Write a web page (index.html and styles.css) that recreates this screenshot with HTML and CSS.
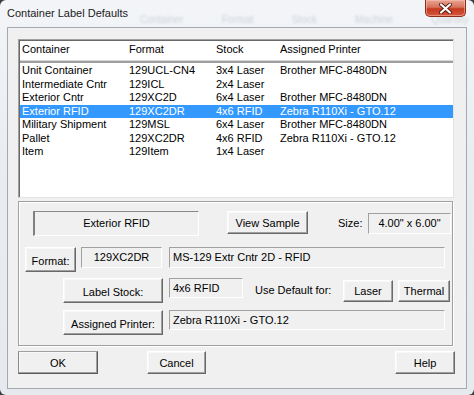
FILE: index.html
```html
<!DOCTYPE html>
<html lang="en">
<head>
    <meta charset="UTF-8">
    <meta name="viewport" content="width=device-width, initial-scale=1.0">
    <title>Container Label Defaults</title>
    <link rel="stylesheet" href="styles.css">
</head>
<body>
    <div class="window">
        <div class="titlebar">
            <span class="title">Container Label Defaults</span>
            <span class="glass">Container &nbsp; Format &nbsp; Stock &nbsp; Machine &nbsp; Quantity</span>
            <button class="close" title="Close">
                <svg width="13" height="11" viewBox="0 0 13 11">
                    <path d="M2 1.5 L11 9.5 M11 1.5 L2 9.5" stroke="#5a1a10" stroke-width="4" stroke-linecap="round"/>
                    <path d="M2 1.5 L11 9.5 M11 1.5 L2 9.5" stroke="#ffffff" stroke-width="2.2" stroke-linecap="round"/>
                </svg>
            </button>
        </div>
        <div class="client">
            <div class="list">
                <div class="list-head cols">
                    <span>Container</span><span>Format</span><span>Stock</span><span>Assigned Printer</span>
                </div>
                <div class="list-body">
                    <div class="cols row"><span>Unit Container</span><span>129UCL-CN4</span><span>3x4 Laser</span><span>Brother MFC-8480DN</span></div>
                    <div class="cols row"><span>Intermediate Cntr</span><span>129ICL</span><span>2x4 Laser</span><span></span></div>
                    <div class="cols row"><span>Exterior Cntr</span><span>129XC2D</span><span>6x4 Laser</span><span>Brother MFC-8480DN</span></div>
                    <div class="cols row selected"><span>Exterior RFID</span><span>129XC2DR</span><span>4x6 RFID</span><span>Zebra R110Xi - GTO.12</span></div>
                    <div class="cols row"><span>Military Shipment</span><span>129MSL</span><span>6x4 Laser</span><span>Brother MFC-8480DN</span></div>
                    <div class="cols row"><span>Pallet</span><span>129XC2DR</span><span>4x6 RFID</span><span>Zebra R110Xi - GTO.12</span></div>
                    <div class="cols row"><span>Item</span><span>129Item</span><span>1x4 Laser</span><span></span></div>
                </div>
            </div>

            <div class="group">
                <div class="line line-1">
                    <div class="field field-name">Exterior RFID</div>
                    <button class="btn btn-sample">View Sample</button>
                    <span class="label label-size">Size:</span>
                    <div class="field field-size">4.00" x 6.00"</div>
                </div>
                <div class="line line-2">
                    <button class="btn btn-format">Format:</button>
                    <div class="field field-code">129XC2DR</div>
                    <div class="field field-wide left">MS-129 Extr Cntr 2D - RFID</div>
                </div>
                <div class="line line-3">
                    <button class="btn btn-long">Label Stock:</button>
                    <div class="field field-stock left">4x6 RFID</div>
                    <span class="label label-default">Use Default for:</span>
                    <button class="btn btn-laser">Laser</button>
                    <button class="btn btn-thermal">Thermal</button>
                </div>
                <div class="line line-4">
                    <button class="btn btn-long">Assigned Printer:</button>
                    <div class="field field-wide field-printer left">Zebra R110Xi - GTO.12</div>
                </div>
            </div>

            <div class="footer">
                <button class="btn btn-ok">OK</button>
                <button class="btn btn-cancel">Cancel</button>
                <button class="btn btn-help">Help</button>
            </div>
        </div>
    </div>
</body>
</html>
```

FILE: styles.css
```css
* {
    box-sizing: border-box;
}
body {
    margin: 0;
    background: #3c3c3c;
    font-family: "Liberation Sans", Arial, sans-serif;
    font-size: 11px;
    color: #000;
}
.window {
    width: 474px;
    height: 395px;
    background: linear-gradient(180deg, #f3f5f8 0%, #e9edf1 40%, #e6eaee 100%);
    border-radius: 6px;
    overflow: hidden;
    display: flex;
    flex-direction: column;
}
.titlebar {
    height: 27px;
    display: flex;
    align-items: flex-start;
    padding-left: 7px;
    position: relative;
}
.title {
    margin-top: 7px;
    line-height: 13px;
    color: #1b1b1b;
    white-space: nowrap;
}
.glass {
    position: absolute;
    left: 140px;
    top: 14px;
    color: #d0d4d9;
    font-size: 10px;
    filter: blur(1.2px);
    white-space: nowrap;
    word-spacing: 10px;
}
.close {
    margin-left: auto;
    margin-right: 8px;
    width: 41px;
    height: 17px;
    padding: 0;
    border: 1px solid #8b2c1c;
    border-top: none;
    border-radius: 0 0 5px 5px;
    background: linear-gradient(180deg, #e8a593 0%, #d7735c 45%, #c5391f 55%, #d4583c 100%);
    box-shadow: inset 0 0 0 1px rgba(255, 200, 190, 0.5);
    display: flex;
    align-items: center;
    justify-content: center;
    position: relative;
    z-index: 1;
}
.client {
    margin: 0 7px;
    width: 460px;
    height: 362px;
    background: #f0f0f0;
    border: 1px solid #a3a9b0;
    padding: 11px 13px 0 10px;
}

/* list view */
.list {
    width: 436px;
    height: 159px;
    background: #fff;
    border: 1px solid;
    border-color: #a0a0a0 #e3e3e3 #e3e3e3 #a0a0a0;
    box-shadow: inset 1px 1px 0 #696969;
    padding: 1px 0 0 1px;
}
.cols {
    display: grid;
    grid-template-columns: 107px 87px 64px 1fr;
    white-space: nowrap;
}
.cols span {
    padding-left: 2px;
    overflow: hidden;
}
.list-head {
    height: 22px;
    line-height: 17px;
    border-bottom: 2px solid #a0a0a0;
    box-shadow: 0 -1px 0 #d5d5d5 inset;
}
.list-body {
    padding-top: 1px;
}
.row {
    height: 13.5px;
    line-height: 13.5px;
}
.row.selected {
    background: #3399ff;
    color: #fff;
}

/* lower group */
.group {
    margin-top: 3px;
    width: 435px;
    height: 145px;
    border: 1px solid #a0a0a0;
    box-shadow: inset 1px 1px 0 #fff, 1px 1px 0 #fff;
    padding-top: 9px;
}
.line {
    display: flex;
    align-items: flex-start;
}
.line-2 {
    margin-top: 11px;
}
.line-3 {
    margin-top: 6px;
}
.line-4 {
    margin-top: 7px;
}
.field {
    height: 21px;
    line-height: 19px;
    text-align: center;
    background: #f0f0f0;
    border: 1px solid;
    border-color: #a0a0a0 #fff #fff #a0a0a0;
    white-space: nowrap;
}
.field.left {
    text-align: left;
    padding-left: 3px;
}
.field-name {
    margin-left: 14px;
    width: 166px;
    height: 25px;
    line-height: 22px;
    border-left: 2px solid #808080;
    border-top-color: #8a8a8a;
}
.field-size {
    width: 83px;
    margin-top: 2px;
}
.field-code {
    margin-left: 5px;
    width: 81px;
}
.field-wide {
    margin-left: 7px;
    width: 276px;
}
.field-stock {
    margin-left: 6px;
    width: 74px;
    height: 20px;
    line-height: 18px;
}
.field-printer {
    margin-left: 6px;
    height: 20px;
    line-height: 18px;
}
.label {
    line-height: 25px;
    white-space: nowrap;
}
.label-size {
    margin-left: 30px;
    width: 30px;
    line-height: 24px;
}
.label-default {
    margin-left: 12px;
    width: 88px;
}

/* buttons */
.btn {
    font-family: inherit;
    font-size: 11px;
    color: #000;
    background: #f0f0f0;
    padding: 0;
    border: 1px solid;
    border-color: #fff #696969 #696969 #fff;
    box-shadow: inset -1px -1px 0 #a0a0a0, inset 1px 1px 0 #f8f8f8;
    white-space: nowrap;
}
.btn-sample {
    margin-left: 28px;
    width: 81px;
    height: 23px;
}
.btn-format {
    margin-left: 6px;
    width: 51px;
    height: 25px;
    padding-top: 2px;
}
.btn-long {
    margin-left: 44px;
    width: 100px;
    height: 25px;
    padding-top: 2px;
}
.btn-laser {
    width: 50px;
    height: 22px;
    margin-top: 2px;
}
.btn-thermal {
    margin-left: 5px;
    width: 52px;
    height: 22px;
    margin-top: 2px;
}
.footer {
    margin-top: 5px;
    display: flex;
}
.footer .btn {
    height: 23px;
}
.btn-ok {
    width: 80px;
    border-color: #a0a0a0 #5a5a5a #5a5a5a #8a8a8a;
}
.btn-cancel {
    margin-left: 49px;
    width: 59px;
}
.btn-help {
    margin-left: auto;
    margin-right: -2px;
    width: 60px;
}
```
